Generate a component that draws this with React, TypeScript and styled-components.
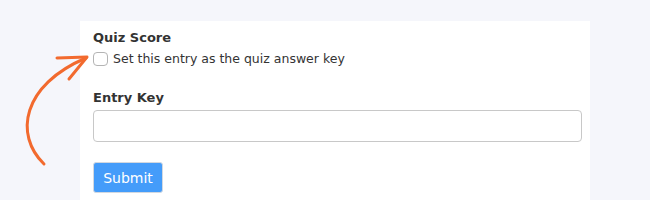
import React from "react";
import styled, { createGlobalStyle } from "styled-components";

const Global = createGlobalStyle`
  html, body { margin: 0; padding: 0; background: #f5f6fb; }
  body { width: 650px; height: 200px; overflow: hidden; font-family: "DejaVu Sans", Verdana, sans-serif; color: #333; }
`;

const Page = styled.div`
  position: relative;
  width: 650px;
  height: 200px;
  padding-top: 21px;
  box-sizing: border-box;
`;

const Card = styled.div`
  margin-left: 80px;
  width: 510px;
  height: 179px;
  background: #fff;
  box-sizing: border-box;
  padding: 8px 8px 0 13px;
  display: flex;
  flex-direction: column;
`;

const Label = styled.div`
  font-size: 13px;
  font-weight: bold;
  line-height: 18px;
  color: #333;
`;

const CheckRow = styled.label`
  display: flex;
  align-items: center;
  gap: 5px;
  margin-top: 4px;
  font-size: 12.5px;
  line-height: 16px;
  color: #333;
`;

const Box = styled.span`
  width: 15px;
  height: 14px;
  box-sizing: border-box;
  border: 1px solid #b4b4b4;
  border-radius: 4px;
  background: #fff;
`;

const Field = styled.div`
  margin-top: 22px;
  display: flex;
  flex-direction: column;
  gap: 3px;
`;

const Input = styled.div`
  width: 489px;
  height: 32px;
  box-sizing: border-box;
  border: 1px solid #c8c8c8;
  border-radius: 4px;
  background: #fff;
`;

const Button = styled.button`
  margin-top: 20px;
  align-self: flex-start;
  width: 70px;
  height: 31px;
  box-sizing: border-box;
  border: 1px solid #d2d8e0;
  border-radius: 3px;
  background: #449cfa;
  color: #fff;
  font-family: "DejaVu Sans", Verdana, sans-serif;
  font-size: 14px;
  padding: 0;
`;

const Arrow = styled.svg`
  position: absolute;
  left: 0;
  top: 0;
`;

export default function App() {
  return (
    <Page>
      <Global />
      <Card>
        <Label>Quiz Score</Label>
        <CheckRow>
          <Box />
          <span>Set this entry as the quiz answer key</span>
        </CheckRow>
        <Field>
          <Label>Entry Key</Label>
          <Input />
        </Field>
        <Button>Submit</Button>
      </Card>
      <Arrow width="100" height="200" viewBox="0 0 100 200">
        <g fill="none" stroke="#f26a2e" strokeWidth="3" strokeLinecap="round" strokeLinejoin="round">
          <path d="M44 164 C 14 135, 22 85, 86 58" />
          <path d="M57 58 L87 57 L69 79" />
        </g>
      </Arrow>
    </Page>
  );
}
